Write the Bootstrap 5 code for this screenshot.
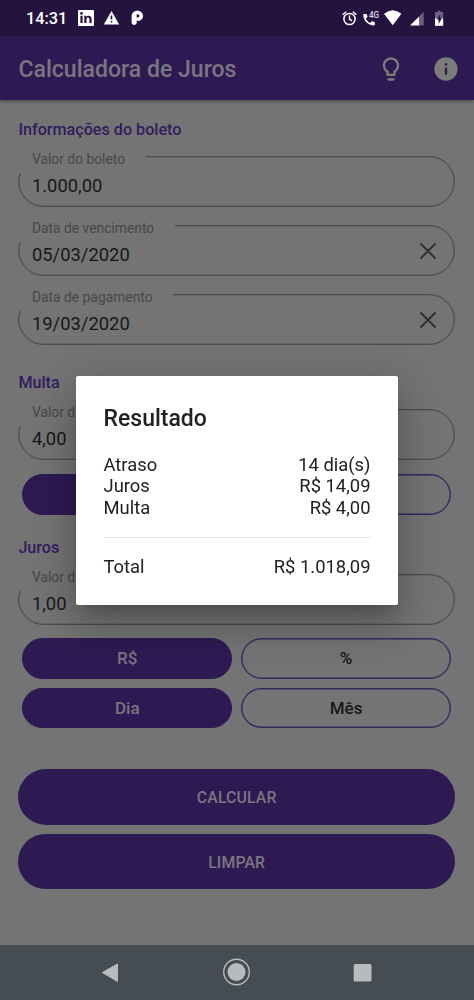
<!DOCTYPE html>
<html lang="pt-BR">
<head>
<meta charset="utf-8">
<meta name="viewport" content="width=device-width, initial-scale=1">
<title>Calculadora de Juros</title>
<link href="https://cdn.jsdelivr.net/npm/bootstrap@5.3.0/dist/css/bootstrap.min.css" rel="stylesheet">
<style>
:root{--page:#747474;--brand:#2e1a52;--outline:#35265f;--field:#4c4c4c}
body{font-family:Roboto,"Liberation Sans",sans-serif;background:var(--page);height:1000px;overflow:hidden;color:#181818}
svg{display:block;flex:none}
.statusbar{height:36px;background:#24133f;color:#fff;padding-left:26px}
.clock{font-size:16.3px;font-weight:500;line-height:38px;width:52px;padding-top:1px;white-space:nowrap}
.appbar{height:64px;background:var(--brand);color:#7b7582;padding:2px 14px 0 18.5px;box-shadow:0 1px 4px rgba(0,0,0,.4)}
.app-title{font-size:23.05px;font-weight:500;line-height:28px;padding-top:2px}
.form-area{padding:17px 19px 0 18.4px}
.section-title{font-size:16.15px;font-weight:500;line-height:25px;margin:0 0 14px;color:#321c5c}
.field{height:51px;border:1px solid var(--field);box-shadow:inset 0 0 0 .5px rgba(70,70,70,.5);border-radius:26px;padding:9px 13.5px 0 12.5px;margin-bottom:18px}
.field-label{left:-2px;top:-7px;height:23px;line-height:18px;padding-left:14.5px;background:var(--page);color:#484848;font-size:13.85px;white-space:nowrap;width:128.5px}
.field-label.w-venc{width:158px}.field-label.w-pag{width:156px}
.field-value{font-size:18.4px;line-height:40px}
.choices{padding:0 4px;gap:9px 9px}
.choice{height:40.5px;border-radius:21px;border:1px solid var(--outline);box-shadow:inset 0 0 0 .5px var(--outline);font-size:17px;font-weight:500;line-height:39.5px;text-align:center;flex:1 1 0;padding:0;color:#171717}
.choice.on{background:var(--brand);border-color:var(--brand);box-shadow:none;color:#7b7582}
.action{height:55.5px;border-radius:28px;background:var(--brand);color:#7b7582;font-size:15.8px;font-weight:500;letter-spacing:.15px;padding:3px 0 0;border:0}
.softkeys{left:0;right:0;bottom:0;height:55px;background:#454d53}
.result{top:376px;left:76px;width:322px;height:229px;border-radius:2px;background:#fff;color:#212121;padding:27px 27.5px 0;box-shadow:0 11px 15px -7px rgba(0,0,0,.2),0 24px 38px 3px rgba(0,0,0,.14),0 9px 46px 8px rgba(0,0,0,.12)}
.result h2{font-size:23px;font-weight:500;line-height:31px;margin:0 0 19.5px}
.result-row{font-size:18.4px;line-height:21.7px}
.rule{height:1px;background:#e6e6e6;margin:18.5px 0 17.5px}
</style>
</head>
<body>
<header>
  <div class="statusbar d-flex align-items-center">
    <span class="clock">14:31</span>
    <svg width="66" height="18" viewBox="78 9 66 18" fill="#fff">
      <rect x="78" y="10" width="16" height="16" rx="1"/>
      <g fill="#24133f"><circle cx="81.5" cy="13.4" r="1.3"/><path d="M80.4 15.8h2.2V23h-2.2zM84.3 15.8h2.1v1c1.2-1.800 5.200-1.700 5.200 2V23h-2.200v-3.800c0-2.300-2.900-2.200-2.900 0V23h-2.200z"/></g>
      <path d="M111.500 11 119.200 24.500H103.800z"/><path fill="#24133f" d="M110.700 15.500h1.600v4h-1.600zM110.700 21h1.600v1.600h-1.600z"/>
      <path fill-rule="evenodd" d="M131.600 17C131.600 13 134 10.800 137.200 10.800c3.300 0 5.800 2.200 5.800 5.200 0 3.400-2.900 5.400-6.300 4.800V22.500c0 3.300-5.100 3.300-5.100 0zM136.700 14.200v3.400c2.200.1 2.700-.8 2.700-1.800s-.8-1.800-2.700-1.600z"/>
    </svg>
    <svg class="ms-auto" width="132" height="24" viewBox="342 6 132 24" fill="#fff">
      <g fill="none" stroke="#fff" stroke-width="1.5"><circle cx="349.500" cy="19" r="5.600"/><path d="M349.500 15.500V19.200l2.500 1.600M342.700 14.800l3.500-3M352.800 11.800l3.500 3"/></g>
      <path d="M364 14h2.300c.5 0 .6.300.7.700l.5 2.400-1.600 1.600c1 2 2.200 3.200 4.200 4.200l1.600-1.600 2.400.5c.4.100.7.300.7.700v2.300c0 .5-.3.700-.8.700-6 0-10.700-4.900-10.700-10.700 0-.5.200-.8.700-.8z"/>
      <text x="368.900" y="18.200" font-size="9" font-family="Roboto,sans-serif" font-weight="500" textLength="10.200" lengthAdjust="spacingAndGlyphs" fill="#d8d2e2">4G</text>
      <path d="M392.700 25.200 384 13.800q8.700-7.200 17.400 0z"/>
      <path d="M410 25.500 419.300 16.200V25.500z"/><path fill="#6d617f" d="M419.300 16.200 423.700 11.800V25.500H419.300z"/>
      <path fill="#6d617f" d="M437.800 10.500h2.700v1.600h2.700v7H435v-7h2.800z"/><path d="M435 18.500h8.200v7.300H435z"/><path fill="#24133f" d="m440.200 14.200-3.300 5.600h1.800v4.200l3.100-5.700h-1.600z"/>
    </svg>
  </div>
  <nav class="appbar d-flex align-items-center position-relative">
    <span class="app-title">Calculadora de Juros</span>
    <svg class="ms-auto" width="28" height="28" viewBox="0 0 24 24" fill="#7b7b78"><path d="M9 21c0 .5.400 1 1 1h4c.600 0 1-.5 1-1v-1H9zM12 2C8.100 2 5 5.100 5 9c0 2.400 1.200 4.500 3 5.700V17c0 .5.400 1 1 1h6c.6 0 1-.5 1-1v-2.300c1.800-1.300 3-3.400 3-5.700 0-3.900-3.100-7-7-7zm2.900 11.100-.9.600V16h-4v-2.300l-.9-.6C7.800 12.200 7 10.600 7 9c0-2.800 2.200-5 5-5s5 2.200 5 5c0 1.600-.8 3.200-2.100 4.100z"/></svg>
    <svg width="28" height="28" viewBox="0 0 24 24" fill="#7b7b78" style="margin-left:27px"><path d="M12 2C6.480 2 2 6.480 2 12s4.480 10 10 10 10-4.480 10-10S17.520 2 12 2zm1 15h-2v-6h2zm0-8h-2V7h2z"/></svg>
  </nav>
</header>

<main class="form-area">
  <h2 class="section-title">Informações do boleto</h2>
  <div class="field position-relative"><span class="field-label position-absolute">Valor do boleto</span><div class="field-value">1.000,00</div></div>
  <div class="field position-relative d-flex justify-content-between"><span class="field-label w-venc position-absolute">Data de vencimento</span><div class="field-value">05/03/2020</div>
    <svg width="26" height="34" viewBox="0 0 26 34" stroke="#303030" stroke-width="1.9"><path d="m5.500 8.500 15 15m0-15-15 15"/></svg></div>
  <div class="field position-relative d-flex justify-content-between"><span class="field-label w-pag position-absolute">Data de pagamento</span><div class="field-value">19/03/2020</div>
    <svg width="26" height="34" viewBox="0 0 26 34" stroke="#303030" stroke-width="1.9"><path d="m5.500 8.500 15 15m0-15-15 15"/></svg></div>

  <h2 class="section-title" style="margin-top:25px">Multa</h2>
  <div class="field position-relative" style="margin-bottom:14px"><span class="field-label position-absolute">Valor d</span><div class="field-value">4,00</div></div>
  <div class="choices d-flex"><div class="choice on"></div><div class="choice"></div></div>

  <h2 class="section-title" style="margin-top:20.500px">Juros</h2>
  <div class="field position-relative" style="margin-bottom:13px"><span class="field-label position-absolute">Valor d</span><div class="field-value">1,00</div></div>
  <div class="choices d-flex"><div class="choice on">R$</div><div class="choice">%</div></div>
  <div class="choices d-flex" style="margin-top:9px"><div class="choice on">Dia</div><div class="choice">Mês</div></div>

  <div class="d-grid" style="margin-top:41px;gap:9px">
    <button class="action">CALCULAR</button>
    <button class="action">LIMPAR</button>
  </div>
</main>

<footer class="softkeys position-fixed d-flex justify-content-center">
  <svg width="474" height="55" viewBox="0 945 474 55" fill="#b5bbbe">
    <path stroke="#b5bbbe" stroke-linejoin="round" d="M102.300 972.500 117.500 964V981.500z"/>
    <circle cx="236.500" cy="972" r="9"/><circle cx="236.500" cy="972" r="12.800" fill="none" stroke="#b5bbbe" stroke-width="1.400"/>
    <rect x="353.700" y="964" width="17.800" height="17.500" rx="1.500"/>
  </svg>
</footer>

<section class="result position-fixed" role="dialog">
  <h2>Resultado</h2>
  <div class="result-row d-flex justify-content-between"><span>Atraso</span><span>14 dia(s)</span></div>
  <div class="result-row d-flex justify-content-between"><span>Juros</span><span>R$ 14,09</span></div>
  <div class="result-row d-flex justify-content-between"><span>Multa</span><span>R$ 4,00</span></div>
  <div class="rule"></div>
  <div class="result-row d-flex justify-content-between"><span>Total</span><span>R$ 1.018,09</span></div>
</section>
<script src="https://cdn.jsdelivr.net/npm/bootstrap@5.3.0/dist/js/bootstrap.bundle.min.js"></script>
</body>
</html>
